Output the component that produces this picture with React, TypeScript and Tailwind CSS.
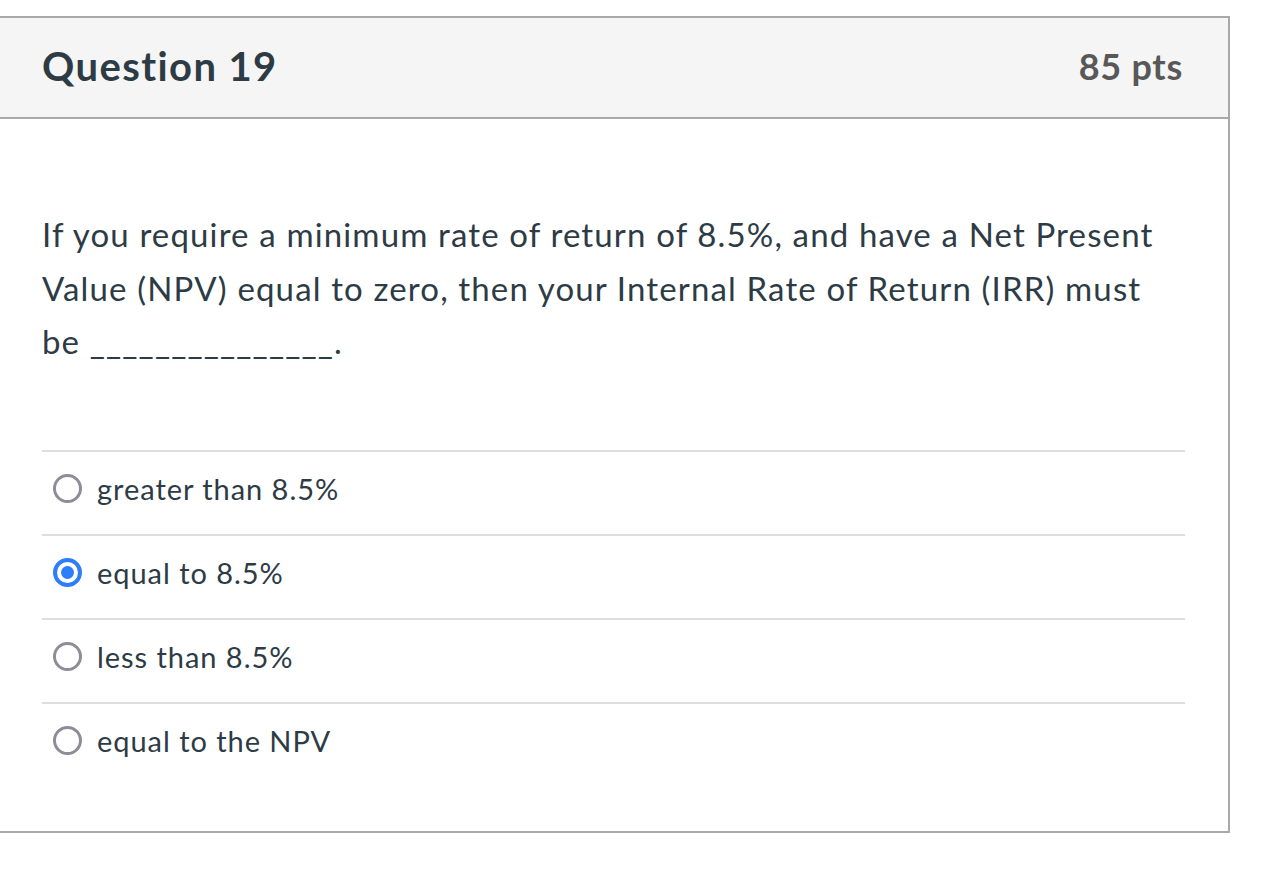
const answers = [
  { id: 'a1', label: 'greater than 8.5%', checked: false },
  { id: 'a2', label: 'equal to 8.5%', checked: true },
  { id: 'a3', label: 'less than 8.5%', checked: false },
  { id: 'a4', label: 'equal to the NPV', checked: false },
]

function Radio({ checked }: { checked: boolean }) {
  if (checked) {
    return (
      <span className="flex h-[29px] w-[29px] flex-shrink-0 items-center justify-center rounded-full border-[4px] border-[#2d7ff9] bg-white">
        <span className="h-[13px] w-[13px] rounded-full bg-[#2d7ff9]" />
      </span>
    )
  }
  return <span className="h-[29px] w-[29px] flex-shrink-0 rounded-full border-[3.5px] border-[#8e8c97] bg-white" />
}

export default function App() {
  return (
    <div className="min-h-screen bg-white pt-4" style={{ fontFamily: 'Lato, "Open Sans", sans-serif' }}>
      <div className="ml-[-2px] w-[1232px] border-2 border-[#a9a9a9]">
        {/* Header */}
        <div className="flex h-[101px] items-center justify-between border-b-2 border-[#a9a9a9] bg-[#f5f5f5] pb-[3px] pl-[42px] pr-[45px]">
          <h2 className="text-[40px] font-bold tracking-[0.035em] text-[#2d3b45]">Question 19</h2>
          <div className="text-[36px] font-bold tracking-[0.02em] text-[#585858]">85 pts</div>
        </div>

        {/* Body */}
        <div className="pb-[45px] pl-[42px] pr-[43px] pt-[89px]">
          <p className="pr-[20px] text-[33px] leading-[53.5px] tracking-[0.0345em] text-[#2d3b45]">
            If you require a minimum rate of return of 8.5%, and have a Net Present Value (NPV) equal to zero, then your
            Internal Rate of Return (IRR) must be _______________.
          </p>

          <div className="mt-[81px]">
            {answers.map(a => (
              <label key={a.id} className="flex h-[84px] items-start border-t-2 border-[#dedede] pl-[11px]">
                <div className="mt-[22px] flex items-center gap-[15px]">
                  <Radio checked={a.checked} />
                  <span className="text-[29px] leading-[30px] tracking-[0.033em] text-[#2d3b45]">{a.label}</span>
                </div>
              </label>
            ))}
          </div>
        </div>
      </div>
    </div>
  )
}
